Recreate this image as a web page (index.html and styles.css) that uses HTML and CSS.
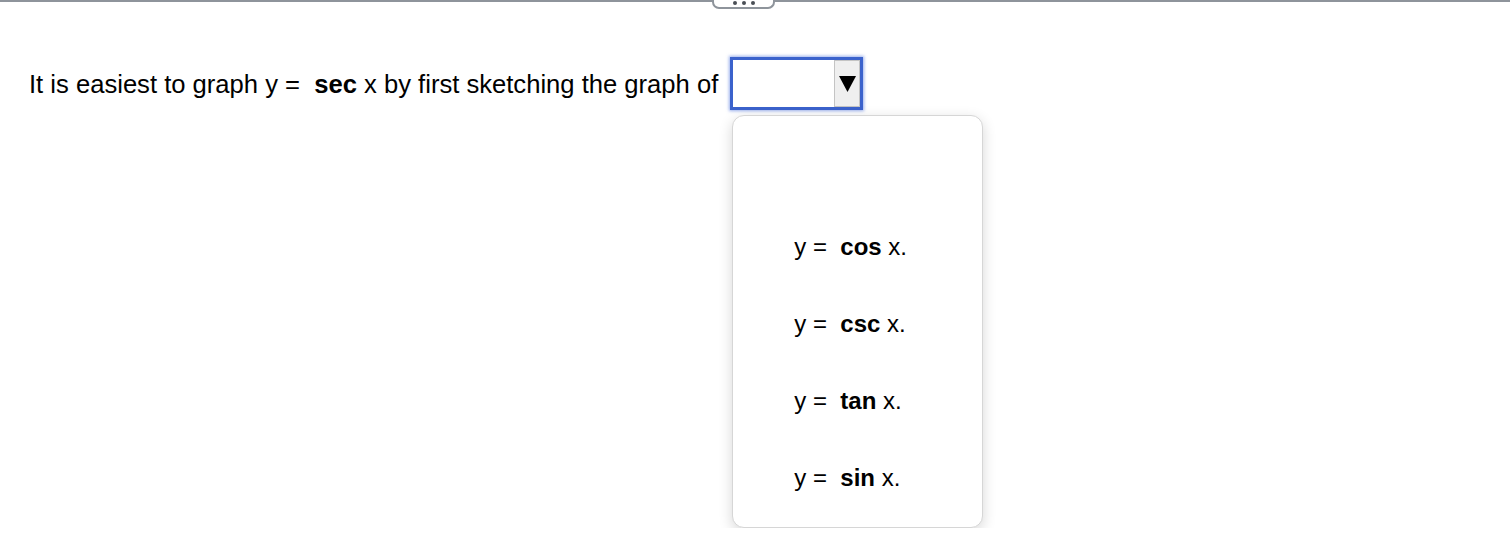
FILE: index.html
```html
<!DOCTYPE html>
<html>
<head>
<meta charset="utf-8">
<link rel="stylesheet" href="styles.css">
</head>
<body>
<div class="topbar">
  <div class="tab"><span class="dot"></span><span class="dot"></span><span class="dot"></span></div>
</div>
<div class="question">
  <div class="prompt">It is easiest to graph y =&nbsp; <b>sec</b> x by first sketching the graph of</div>
  <div class="picker">
    <div class="select">
      <div class="value"></div>
      <div class="arrow"><svg width="17" height="17" viewBox="0 0 16 16"><polygon points="0,1 16,1 8,16" fill="#000"/></svg></div>
    </div>
    <ul class="menu">
      <li class="opt"></li>
      <li class="opt">y =&nbsp; <b>cos</b> x.</li>
      <li class="opt">y =&nbsp; <b>csc</b> x.</li>
      <li class="opt">y =&nbsp; <b>tan</b> x.</li>
      <li class="opt">y =&nbsp; <b>sin</b> x.</li>
    </ul>
  </div>
</div>
</body>
</html>
```
FILE: styles.css
```css
html, body {
  margin: 0;
  padding: 0;
  background: #fff;
  font-family: "Liberation Sans", Arial, sans-serif;
  color: #000;
}
.topbar {
  position: relative;
  height: 2px;
  background: #8e949b;
}
.tab {
  position: absolute;
  left: 712px;
  top: -2px;
  width: 59px;
  height: 8px;
  background: #fff;
  border: 2px solid #8e949b;
  border-top: none;
  border-radius: 0 0 7px 7px;
  display: flex;
  justify-content: center;
  align-items: flex-end;
  gap: 5px;
  padding-bottom: 1px;
  box-sizing: content-box;
}
.dot {
  width: 4px;
  height: 4px;
  border-radius: 50%;
  background: #4a4f55;
  margin-bottom: 1px;
}
.question {
  display: flex;
  align-items: flex-start;
  padding-left: 29px;
  margin-top: 55px;
  gap: 12px;
}
.prompt {
  font-size: 25.6px;
  line-height: 54px;
  white-space: nowrap;
}
.prompt b { font-weight: bold; }
.picker {
  display: flex;
  flex-direction: column;
  align-items: flex-start;
}
.select {
  width: 127px;
  height: 47px;
  border: 3px solid #3b62cc;
  box-shadow: 0 0 3px 1px rgba(70, 110, 220, 0.55);
  display: flex;
  justify-content: flex-end;
  background: #fff;
}
.arrow {
  width: 24px;
  height: 45px;
  background: #efefef;
  border: 1px solid #c4c4c4;
  display: flex;
  align-items: center;
  justify-content: center;
}
.arrow svg { display: block; }
.menu {
  list-style: none;
  margin: 5px 0 0 2px;
  padding: 15px 0 11px 0;
  width: 249px;
  border: 1px solid #d6d6d6;
  border-radius: 12px;
  background: #fff;
  box-shadow: 0 4px 14px rgba(0, 0, 0, 0.16);
}
.opt {
  height: 77px;
  line-height: 77px;
  padding-left: 61px;
  font-size: 24px;
  white-space: nowrap;
}
```
